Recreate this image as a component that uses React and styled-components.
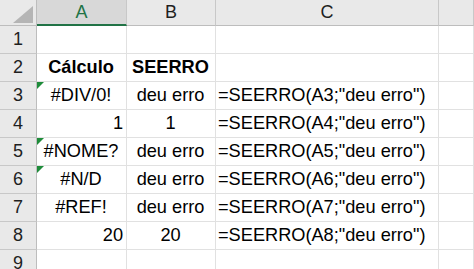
import React from "react";
import styled, { createGlobalStyle } from "styled-components";

const Global = createGlobalStyle`
  html, body { margin: 0; padding: 0; background: #ffffff; }
  body { font-family: "Liberation Sans", Arial, sans-serif; overflow: hidden; }
`;

const Sheet = styled.div`
  display: grid;
  grid-template-columns: 37px 90px 89px 223px 1fr;
  grid-template-rows: 26px repeat(9, 28px);
  width: 474px;
  height: 269px;
  overflow: hidden;
  background: #ffffff;
`;

const Corner = styled.div`
  position: relative;
  background: #e9e9e9;
  border-right: 1px solid #bdbdbd;
  border-bottom: 1px solid #bdbdbd;
  &::after {
    content: "";
    position: absolute;
    right: 3px;
    bottom: 2px;
    width: 0;
    height: 0;
    border-left: 20px solid transparent;
    border-bottom: 17px solid #b5b5b5;
  }
`;

const ColHead = styled.div`
  display: flex;
  align-items: center;
  justify-content: center;
  font-size: 18px;
  color: ${(p) => (p.$active ? "#217346" : "#1f1f1f")};
  background: ${(p) => (p.$active ? "#d8d8d8" : "#e9e9e9")};
  border-right: 1px solid #c8c8c8;
  border-bottom: ${(p) => (p.$active ? "2px solid #217346" : "1px solid #bdbdbd")};
  box-sizing: border-box;
  padding-top: ${(p) => (p.$active ? "1px" : "0")};
`;

const RowHead = styled.div`
  display: flex;
  align-items: flex-end;
  justify-content: center;
  padding-bottom: 3px;
  box-sizing: border-box;
  font-size: 18px;
  color: #1f1f1f;
  background: #e9e9e9;
  border-right: 1px solid #bdbdbd;
  border-bottom: 1px solid #c8c8c8;
`;

const Cell = styled.div`
  position: relative;
  display: flex;
  align-items: flex-end;
  justify-content: ${(p) =>
    p.$align === "right" ? "flex-end" : p.$align === "left" ? "flex-start" : "center"};
  padding: 0 3px 3px 2px;
  box-sizing: border-box;
  font-size: 18.2px;
  font-weight: ${(p) => (p.$bold ? 700 : 400)};
  color: #000000;
  white-space: nowrap;
  border-right: 1px solid #e1e1e1;
  border-bottom: 1px solid #e1e1e1;
  ${(p) =>
    p.$flag &&
    `
    &::before {
      content: "";
      position: absolute;
      left: 0;
      top: 0;
      border-top: 7px solid #1e8c3a;
      border-right: 7px solid transparent;
    }
  `}
`;

const rows = [
  { a: "", b: "", c: "" },
  { a: "Cálculo", b: "SEERRO", c: "", bold: true },
  { a: "#DIV/0!", b: "deu erro", c: '=SEERRO(A3;"deu erro")', flag: true },
  { a: "1", b: "1", c: '=SEERRO(A4;"deu erro")', num: true },
  { a: "#NOME?", b: "deu erro", c: '=SEERRO(A5;"deu erro")', flag: true },
  { a: "#N/D", b: "deu erro", c: '=SEERRO(A6;"deu erro")', flag: true },
  { a: "#REF!", b: "deu erro", c: '=SEERRO(A7;"deu erro")' },
  { a: "20", b: "20", c: '=SEERRO(A8;"deu erro")', num: true },
  { a: "", b: "", c: "" },
];

export default function App() {
  return (
    <>
      <Global />
      <Sheet>
        <Corner />
        <ColHead $active>A</ColHead>
        <ColHead>B</ColHead>
        <ColHead>C</ColHead>
        <ColHead />
        {rows.map((r, i) => (
          <React.Fragment key={i}>
            <RowHead>{i + 1}</RowHead>
            <Cell $bold={r.bold} $flag={r.flag} $align={r.num ? "right" : "center"}>
              {r.a}
            </Cell>
            <Cell $bold={r.bold}>{r.b}</Cell>
            <Cell $align="left">{r.c}</Cell>
            <Cell />
          </React.Fragment>
        ))}
      </Sheet>
    </>
  );
}
